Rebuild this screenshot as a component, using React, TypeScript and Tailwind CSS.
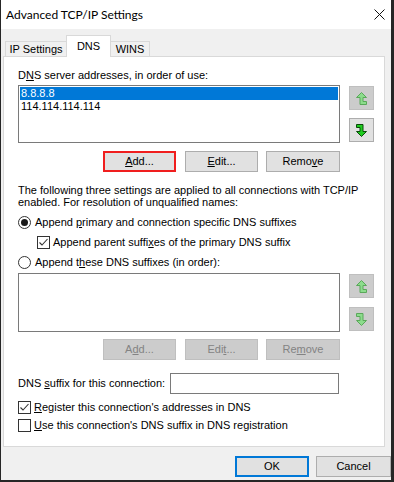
import React from 'react';
import clsx from 'clsx';

function Arrow({ up, enabled }: { up: boolean; enabled: boolean }) {
  return (
    <svg
      width="11"
      height="13"
      viewBox="0 0 11 13"
      className={clsx(!up && 'rotate-180')}
    >
      <polygon
        points="5.5,0.5 10.5,5.5 7,5.5 7,9.5 10.5,9.5 10.5,12.5 4,12.5 4,5.5 0.5,5.5"
        fill={enabled ? '#1fcc1f' : '#8cdc8c'}
        stroke={enabled ? '#0a4a0a' : '#5aa85a'}
        strokeWidth="1"
        strokeLinejoin="miter"
      />
    </svg>
  );
}

function ArrowButton({ up, enabled, className }: { up: boolean; enabled: boolean; className?: string }) {
  return (
    <div
      className={clsx(
        'w-[25px] h-[24px] border flex items-center justify-center',
        enabled ? 'bg-[#e1e1e1] border-[#adadad]' : 'bg-[#cccccc] border-[#bfbfbf]',
        className,
      )}
    >
      <Arrow up={up} enabled={enabled} />
    </div>
  );
}

function Button({
  children,
  disabled,
  highlight,
  className,
}: {
  children: React.ReactNode;
  disabled?: boolean;
  highlight?: 'red' | 'blue';
  className?: string;
}) {
  return (
    <div
      className={clsx(
        'h-[21px] flex items-center justify-center leading-[13px] whitespace-nowrap',
        disabled ? 'bg-[#cccccc] text-[#838383]' : 'bg-[#e1e1e1] text-black',
        highlight === 'red'
          ? 'border-2 border-[#f01e1e]'
          : highlight === 'blue'
            ? 'border-2 border-[#0078d7]'
            : disabled
              ? 'border border-[#bfbfbf]'
              : 'border border-[#adadad]',
        className,
      )}
    >
      {children}
    </div>
  );
}

function Check({ checked, className }: { checked: boolean; className?: string }) {
  return (
    <div className={clsx('w-[13px] h-[13px] border border-[#333333] bg-white flex items-center justify-center shrink-0', className)}>
      {checked && (
        <svg width="11" height="11" viewBox="0 0 11 11">
          <path d="M1.5 5.5 L4 8 L9.5 2" fill="none" stroke="#333333" strokeWidth="1.1" />
        </svg>
      )}
    </div>
  );
}

function Radio({ checked }: { checked: boolean }) {
  return (
    <div className="w-[13px] h-[13px] rounded-full border border-[#333333] bg-white flex items-center justify-center shrink-0">
      {checked && <div className="w-[7px] h-[7px] rounded-full bg-[#1a1a1a]" />}
    </div>
  );
}

export default function App() {
  return (
    <div className="w-[394px] h-[482px] bg-white border-l border-r-[3px] border-b-2 border-[#262626] flex flex-col font-['Liberation_Sans',Arial,sans-serif] text-[11px] text-black overflow-hidden">
      {/* Title bar */}
      <div className="h-[29px] bg-white flex items-center justify-between pl-[5px] pr-[6px] shrink-0">
        <span className="font-['Lato',sans-serif] text-[12px] leading-[14px] whitespace-nowrap">Advanced TCP/IP Settings</span>
        <svg width="11" height="11" viewBox="0 0 11 11">
          <path d="M0.5 0.5 L10.5 10.5 M10.5 0.5 L0.5 10.5" stroke="#111111" strokeWidth="1" />
        </svg>
      </div>

      {/* Body */}
      <div className="flex-1 bg-[#f0f0f0] pl-[2px] flex flex-col">
        {/* Tabs */}
        <div className="flex items-end h-[22px] mt-[6px] ml-[2px] whitespace-nowrap">
          <div className="w-[62px] h-[16px] bg-[#f0f0f0] border border-b-0 border-[#d9d9d9] flex items-center justify-center leading-[13px]">
            IP Settings
          </div>
          <div className="relative z-10 w-[45px] h-[22px] bg-white border border-b-0 border-[#d9d9d9] -ml-px flex justify-center pt-[4px] leading-[13px]">
            DNS
          </div>
          <div className="w-[39px] h-[16px] bg-[#f0f0f0] border border-b-0 border-l-0 border-[#d9d9d9] flex items-center justify-center leading-[13px]">
            WINS
          </div>
        </div>

        {/* Panel */}
        <div className="-mt-px w-[382px] h-[391px] bg-white border border-[#d9d9d9] pl-[14px] flex flex-col whitespace-nowrap">
          <div className="mt-[12px] h-[13px] leading-[13px]">
            D<u>N</u>S server addresses, in order of use:
          </div>

          <div className="flex mt-[3px]">
            <div className="w-[322px] h-[58px] border border-[#7a7a7a] bg-white p-px">
              <div className="h-[13px] leading-[13px] bg-[#0078d7] text-white pl-[1px]">8.8.8.8</div>
              <div className="h-[13px] leading-[13px] pl-[1px]">114.114.114.114</div>
            </div>
            <div className="ml-[9px] flex flex-col">
              <ArrowButton up enabled={false} className="mt-[1px]" />
              <ArrowButton up={false} enabled className="mt-[8px]" />
            </div>
          </div>

          <div className="flex mt-[8px]">
            <Button highlight="red" className="ml-[85px] w-[73px]">
              <span><u>A</u>dd...</span>
            </Button>
            <Button className="ml-[9px] w-[73px]">
              <span><u>E</u>dit...</span>
            </Button>
            <Button className="ml-[8px] w-[74px]">
              <span>Remo<u>v</u>e</span>
            </Button>
          </div>

          <div className="mt-[12px] leading-[12px] w-[345px] whitespace-normal">
            The following three settings are applied to all connections with TCP/IP enabled. For resolution of unqualified names:
          </div>

          <div className="mt-[8px] h-[13px] flex items-center">
            <Radio checked />
            <span className="ml-[4px] leading-[13px]">
              Append <u>p</u>rimary and connection specific DNS suffixes
            </span>
          </div>

          <div className="mt-[7px] h-[13px] flex items-center ml-[19px]">
            <Check checked />
            <span className="ml-[3px] leading-[13px]">
              Append parent suffi<u>x</u>es of the primary DNS suffix
            </span>
          </div>

          <div className="mt-[7px] h-[13px] flex items-center">
            <Radio checked={false} />
            <span className="ml-[4px] leading-[13px]">
              Append t<u>h</u>ese DNS suffixes (in order):
            </span>
          </div>

          <div className="flex mt-[4px]">
            <div className="w-[322px] h-[59px] border border-[#7a7a7a] bg-white" />
            <div className="ml-[9px] flex flex-col">
              <ArrowButton up enabled={false} className="mt-[1px]" />
              <ArrowButton up={false} enabled={false} className="mt-[9px]" />
            </div>
          </div>

          <div className="flex mt-[7px]">
            <Button disabled className="ml-[85px] w-[73px]">
              <span>A<u>d</u>d...</span>
            </Button>
            <Button disabled className="ml-[9px] w-[73px]">
              <span>Edi<u>t</u>...</span>
            </Button>
            <Button disabled className="ml-[8px] w-[74px]">
              <span>Re<u>m</u>ove</span>
            </Button>
          </div>

          <div className="flex items-center mt-[13px]">
            <span className="w-[152px] leading-[13px]">
              DNS <u>s</u>uffix for this connection:
            </span>
            <div className="w-[169px] h-[21px] border border-[#7a7a7a] bg-white" />
          </div>

          <div className="mt-[7px] h-[13px] flex items-center">
            <Check checked />
            <span className="ml-[3px] leading-[13px]">
              <u>R</u>egister this connection's addresses in DNS
            </span>
          </div>

          <div className="mt-[5px] h-[13px] flex items-center">
            <Check checked={false} />
            <span className="ml-[3px] leading-[13px]">
              <u>U</u>se this connection's DNS suffix in DNS registration
            </span>
          </div>
        </div>

        {/* Dialog buttons */}
        <div className="flex justify-end mt-[9px] gap-[7px]">
          <Button highlight="blue" className="w-[74px]">OK</Button>
          <Button className="w-[75px]">Cancel</Button>
        </div>
      </div>
    </div>
  );
}
